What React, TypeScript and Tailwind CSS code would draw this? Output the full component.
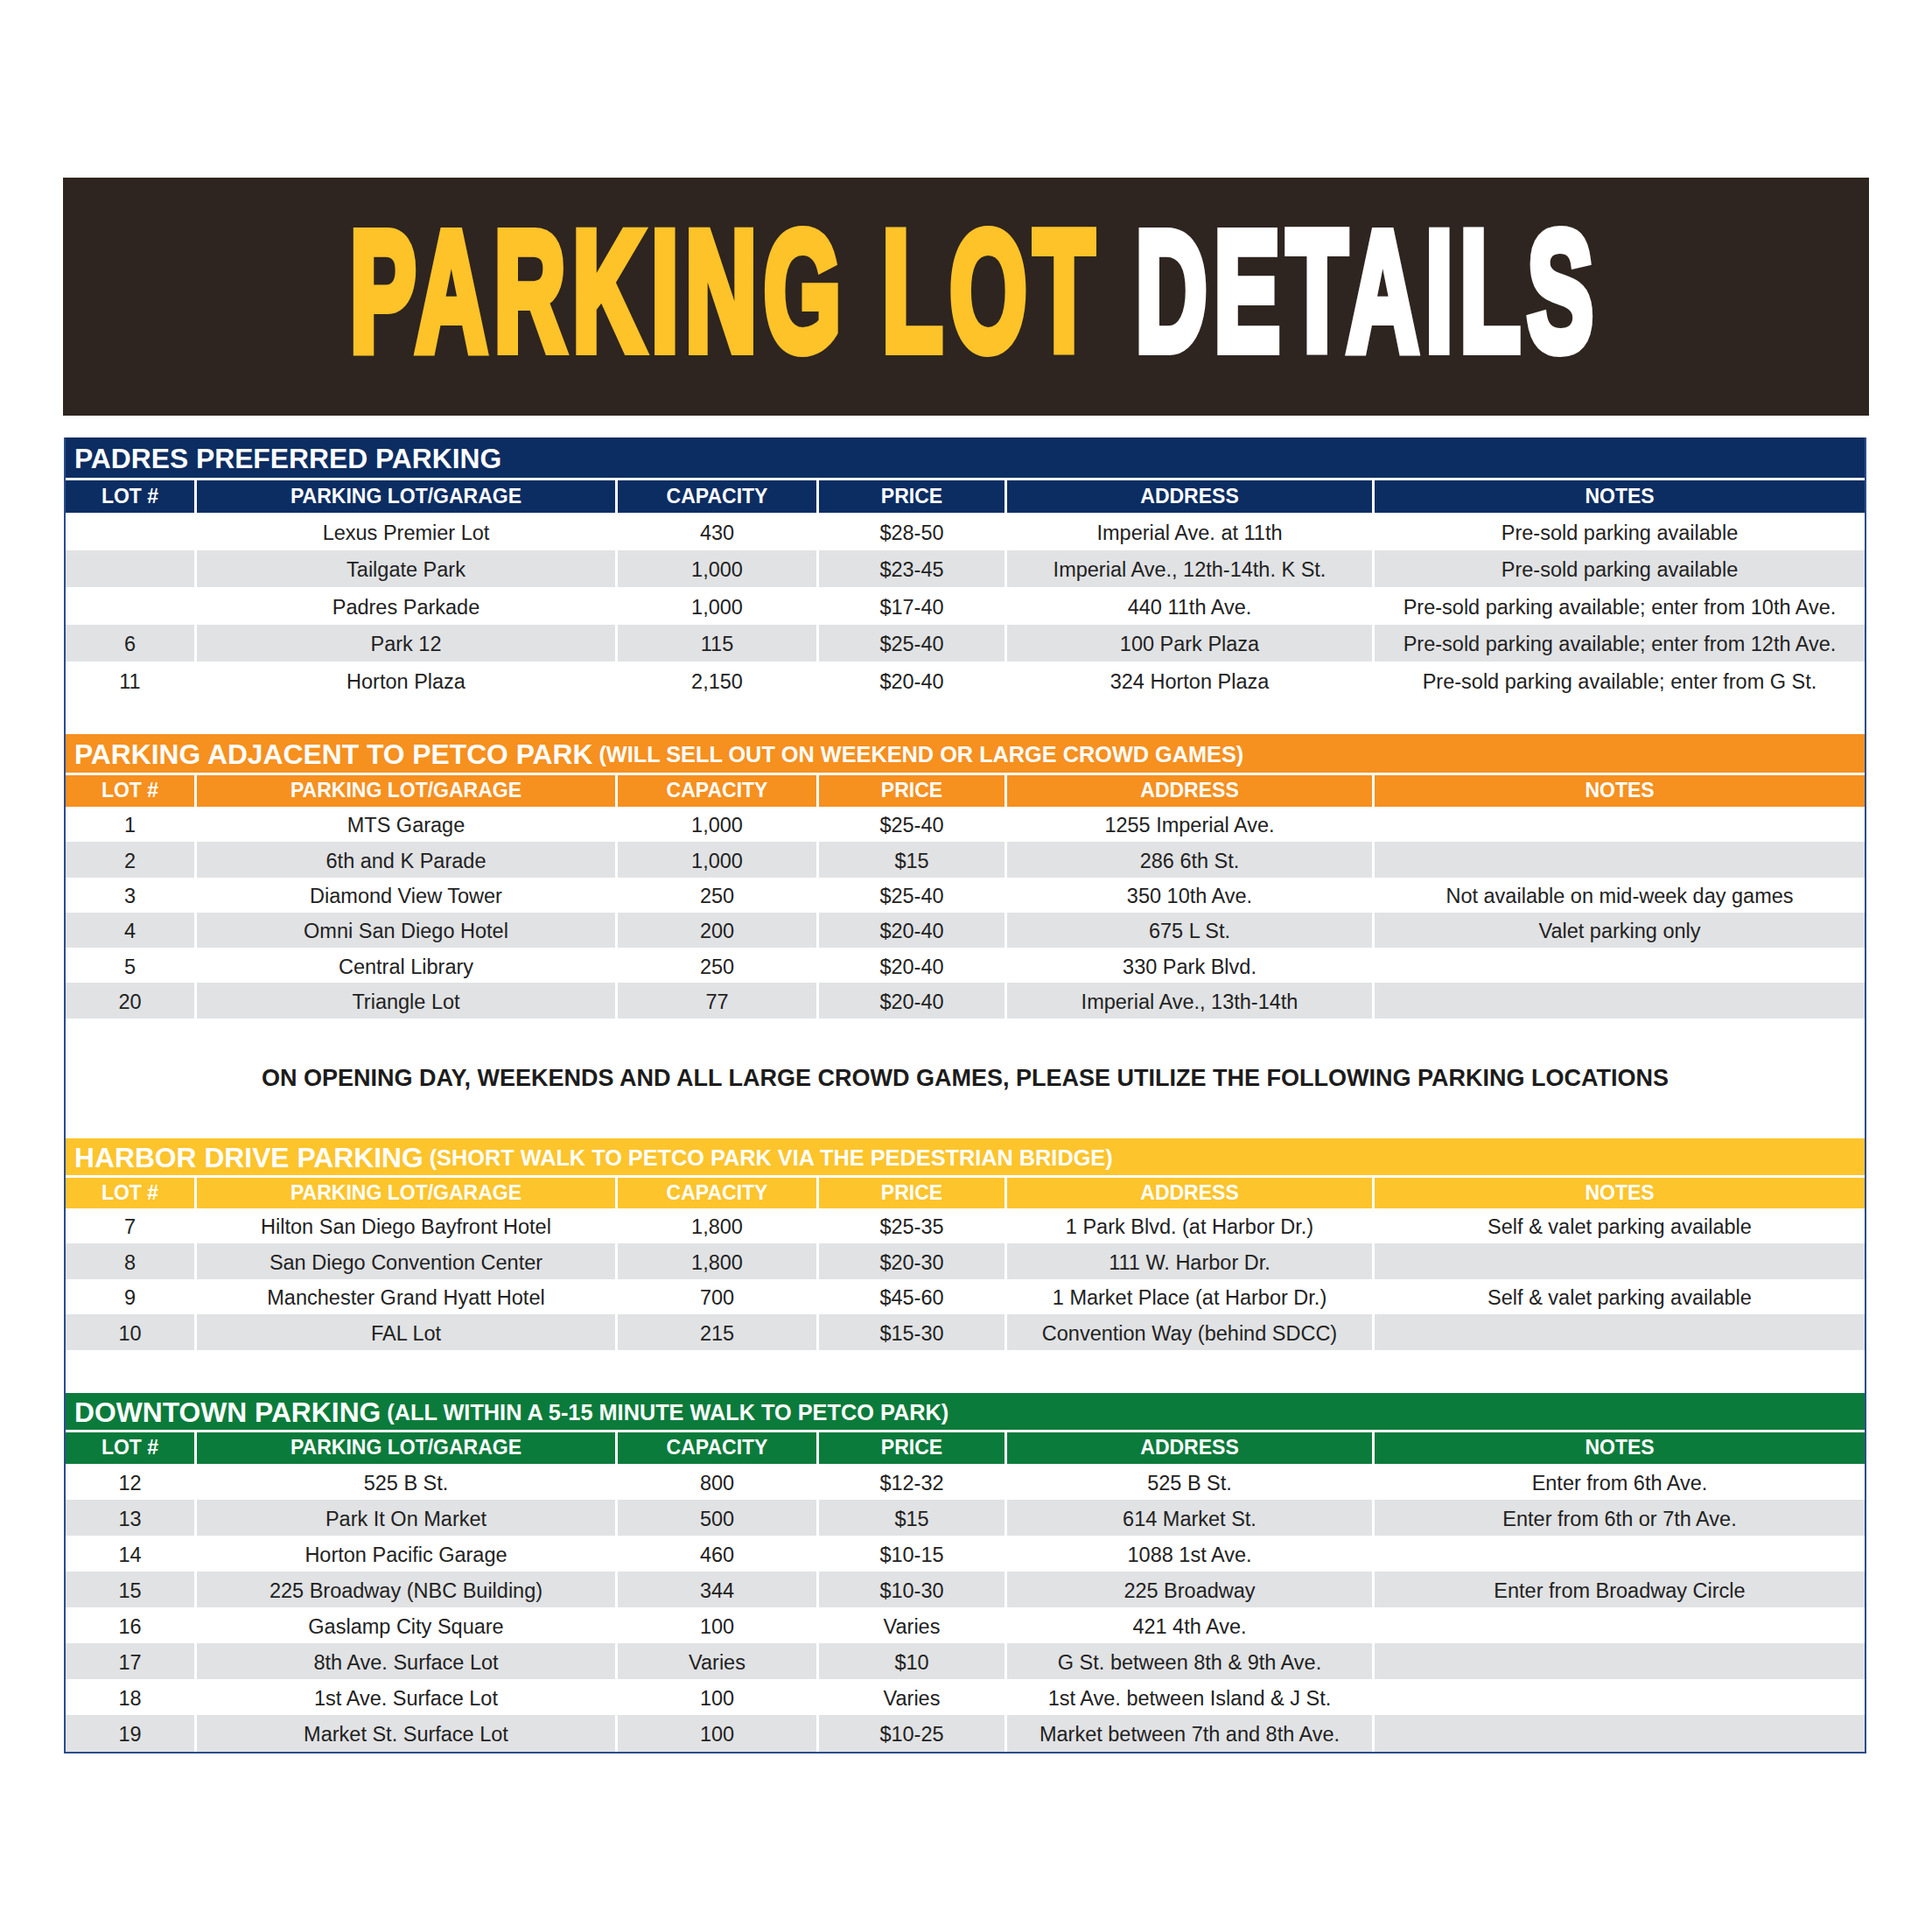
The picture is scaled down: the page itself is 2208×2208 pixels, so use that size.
import React from "react";

type Cells = [string, string, string, string, string, string];

const COLS = ["w-[147px]", "w-[481px]", "w-[230px]", "w-[215px]", "w-[420px]", "w-[563px]"];
const HEADS: Cells = ["LOT #", "PARKING LOT/GARAGE", "CAPACITY", "PRICE", "ADDRESS", "NOTES"];

function HeaderRow({ bg, h }: { bg: string; h: string }) {
  return (
    <div className={`flex mt-[3px] ${h}`}>
      {HEADS.map((c, i) => (
        <div
          key={i}
          className={`${COLS[i]} ${i > 0 ? "border-l-[3px] border-white" : ""} ${bg} flex items-center justify-center text-white font-bold text-[23px] leading-none whitespace-nowrap`}
        >
          {c}
        </div>
      ))}
    </div>
  );
}

function DataRow({ cells, gray, h }: { cells: Cells; gray: boolean; h: string }) {
  return (
    <div className={`flex ${h}`}>
      {cells.map((c, i) => (
        <div
          key={i}
          className={`${COLS[i]} ${i > 0 ? "border-l-[3px] border-white" : ""} ${gray ? "bg-[#e1e2e4]" : "bg-white"} flex items-center justify-center pt-[4px] text-[23.5px] text-[#222222] leading-none whitespace-nowrap`}
        >
          {c}
        </div>
      ))}
    </div>
  );
}

function Section({
  title,
  sub,
  bg,
  titleH,
  headH,
  rowH,
  rows,
}: {
  title: string;
  sub?: string;
  bg: string;
  titleH: string;
  headH: string;
  rowH: string;
  rows: Cells[];
}) {
  return (
    <div className="flex flex-col">
      <div className={`${bg} ${titleH} flex items-center pl-[10px] pt-[4px] text-white font-bold leading-none whitespace-nowrap`}>
        <span className="text-[31.8px]">{title}</span>
        {sub ? <span className="text-[25.3px] ml-[7px]">{sub}</span> : null}
      </div>
      <HeaderRow bg={bg} h={headH} />
      {rows.map((r, i) => (
        <DataRow key={i} cells={r} gray={i % 2 === 1} h={rowH} />
      ))}
    </div>
  );
}

const PREFERRED: Cells[] = [
  ["", "Lexus Premier Lot", "430", "$28-50", "Imperial Ave. at 11th", "Pre-sold parking available"],
  ["", "Tailgate Park", "1,000", "$23-45", "Imperial Ave., 12th-14th. K St.", "Pre-sold parking available"],
  ["", "Padres Parkade", "1,000", "$17-40", "440 11th Ave.", "Pre-sold parking available; enter from 10th Ave."],
  ["6", "Park 12", "115", "$25-40", "100 Park Plaza", "Pre-sold parking available; enter from 12th Ave."],
  ["11", "Horton Plaza", "2,150", "$20-40", "324 Horton Plaza", "Pre-sold parking available; enter from G St."],
];

const ADJACENT: Cells[] = [
  ["1", "MTS Garage", "1,000", "$25-40", "1255 Imperial Ave.", ""],
  ["2", "6th and K Parade", "1,000", "$15", "286 6th St.", ""],
  ["3", "Diamond View Tower", "250", "$25-40", "350 10th Ave.", "Not available on mid-week day games"],
  ["4", "Omni San Diego Hotel", "200", "$20-40", "675 L St.", "Valet parking only"],
  ["5", "Central Library", "250", "$20-40", "330 Park Blvd.", ""],
  ["20", "Triangle Lot", "77", "$20-40", "Imperial Ave., 13th-14th", ""],
];

const HARBOR: Cells[] = [
  ["7", "Hilton San Diego Bayfront Hotel", "1,800", "$25-35", "1 Park Blvd. (at Harbor Dr.)", "Self & valet parking available"],
  ["8", "San Diego Convention Center", "1,800", "$20-30", "111 W. Harbor Dr.", ""],
  ["9", "Manchester Grand Hyatt Hotel", "700", "$45-60", "1 Market Place (at Harbor Dr.)", "Self & valet parking available"],
  ["10", "FAL Lot", "215", "$15-30", "Convention Way (behind SDCC)", ""],
];

const DOWNTOWN: Cells[] = [
  ["12", "525 B St.", "800", "$12-32", "525 B St.", "Enter from 6th Ave."],
  ["13", "Park It On Market", "500", "$15", "614 Market St.", "Enter from 6th or 7th Ave."],
  ["14", "Horton Pacific Garage", "460", "$10-15", "1088 1st Ave.", ""],
  ["15", "225 Broadway (NBC Building)", "344", "$10-30", "225 Broadway", "Enter from Broadway Circle"],
  ["16", "Gaslamp City Square", "100", "Varies", "421 4th Ave.", ""],
  ["17", "8th Ave. Surface Lot", "Varies", "$10", "G St. between 8th & 9th Ave.", ""],
  ["18", "1st Ave. Surface Lot", "100", "Varies", "1st Ave. between Island & J St.", ""],
  ["19", "Market St. Surface Lot", "100", "$10-25", "Market between 7th and 8th Ave.", ""],
];

export default function App() {
  return (
    <div className="w-[2208px] h-[2208px] bg-white font-['Liberation_Sans',Arial,sans-serif] pt-[203px] pl-[72px]">
      <div className="w-[2064px] h-[272px] bg-[#2e2520] flex items-center justify-center pb-[12px] pl-[21px] overflow-hidden">
        <span className="inline-block whitespace-nowrap font-bold text-[194px] leading-none tracking-[13px] [-webkit-text-stroke-width:12px] [transform:scaleX(0.586)]">
          <span className="text-[#fdc328]">PARKING LOT</span> <span className="text-white">DETAILS</span>
        </span>
      </div>
      <div className="ml-[1px] mt-[25px] w-[2060px] border-x-2 border-b-2 border-[#2a4c8c] flex flex-col">
        <Section
          title="PADRES PREFERRED PARKING"
          bg="bg-[#0c2d62]"
          titleH="h-[46px]"
          headH="h-[37px]"
          rowH="h-[42.6px]"
          rows={PREFERRED}
        />
        <div className="h-[40px]" />
        <Section
          title="PARKING ADJACENT TO PETCO PARK"
          sub="(WILL SELL OUT ON WEEKEND OR LARGE CROWD GAMES)"
          bg="bg-[#f6901f]"
          titleH="h-[44px]"
          headH="h-[36px]"
          rowH="h-[40.3px]"
          rows={ADJACENT}
        />
        <div className="h-[137px] flex items-center justify-center text-[27px] font-bold text-[#1c1c1c] whitespace-nowrap leading-none">
          ON OPENING DAY, WEEKENDS AND ALL LARGE CROWD GAMES, PLEASE UTILIZE THE FOLLOWING PARKING LOCATIONS
        </div>
        <Section
          title="HARBOR DRIVE PARKING"
          sub="(SHORT WALK TO PETCO PARK VIA THE PEDESTRIAN BRIDGE)"
          bg="bg-[#fdc42c]"
          titleH="h-[42px]"
          headH="h-[35px]"
          rowH="h-[40.5px]"
          rows={HARBOR}
        />
        <div className="h-[49px]" />
        <Section
          title="DOWNTOWN PARKING"
          sub="(ALL WITHIN A 5-15 MINUTE WALK TO PETCO PARK)"
          bg="bg-[#0b7b3b]"
          titleH="h-[42px]"
          headH="h-[36px]"
          rowH="h-[41.1px]"
          rows={DOWNTOWN}
        />
      </div>
    </div>
  );
}
